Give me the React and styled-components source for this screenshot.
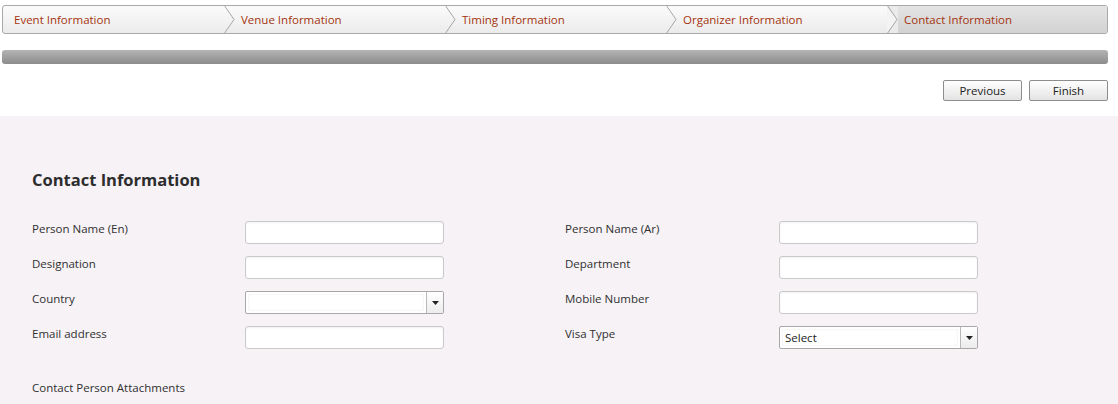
import React from 'react';
import styled, { createGlobalStyle } from 'styled-components';

const steps = [
  'Event Information',
  'Venue Information',
  'Timing Information',
  'Organizer Information',
  'Contact Information',
];

const fields = [
  { label: 'Person Name (En)', type: 'text' },
  { label: 'Person Name (Ar)', type: 'text' },
  { label: 'Designation', type: 'text' },
  { label: 'Department', type: 'text' },
  { label: 'Country', type: 'select', value: '' },
  { label: 'Mobile Number', type: 'text' },
  { label: 'Email address', type: 'text' },
  { label: 'Visa Type', type: 'select', value: 'Select' },
];

const GlobalStyle = createGlobalStyle`
  body {
    margin: 0;
    background: #ffffff;
    font-family: "Open Sans", "DejaVu Sans", sans-serif;
  }
`;

const Page = styled.div`
  width: 1118px;
  height: 404px;
  overflow: hidden;
  display: flex;
  flex-direction: column;
`;

const Top = styled.div`
  padding: 5px 10px 0 2px;
  display: flex;
  flex-direction: column;
`;

const Wizard = styled.div`
  display: flex;
  height: 27px;
  border: 1px solid #a9a9a9;
  border-radius: 3px;
  overflow: hidden;
  background: linear-gradient(#fbfbfb, #ebebeb);
`;

const Step = styled.div`
  display: flex;
  align-items: stretch;
  width: ${({ $last }) => ($last ? 'auto' : '221px')};
  flex: ${({ $last }) => ($last ? 1 : 'none')};
  background: ${({ $active }) => ($active ? 'linear-gradient(#e4e4e4, #d2d2d2)' : 'transparent')};
`;

const StepLabel = styled.span`
  display: flex;
  align-items: center;
  padding-left: ${({ $first }) => ($first ? '11px' : '6px')};
  font-size: 11.5px;
  color: #a3340e;
  white-space: nowrap;
`;

const Separator = styled.svg`
  flex: none;
  display: block;
`;

const Progress = styled.div`
  margin-top: 16px;
  height: 14px;
  border-radius: 3px;
  background: linear-gradient(#b4b4b4, #8c8c8c);
`;

const Actions = styled.div`
  display: flex;
  justify-content: flex-end;
  gap: 7px;
  margin-top: 16px;
`;

const Button = styled.button`
  width: 79px;
  height: 21px;
  padding: 0;
  border: 1px solid #8d8d8d;
  border-radius: 2px;
  background: linear-gradient(#ffffff, #e3e3e3);
  font-family: "Open Sans", "DejaVu Sans", sans-serif;
  font-size: 11.5px;
  color: #222;
`;

const Section = styled.section`
  margin-top: 15px;
  flex: 1;
  background: #f6f2f6;
  padding: 54px 0 0 32px;
`;

const Heading = styled.h2`
  margin: 0 0 31px;
  font-size: 16.5px;
  line-height: 20px;
  font-weight: 700;
  color: #2d2d2d;
`;

const Form = styled.div`
  display: grid;
  grid-template-columns: 213px 199px 121px 214px 199px;
  row-gap: 12px;
  align-items: start;
`;

const Label = styled.label`
  font-size: 11.5px;
  color: #303030;
  line-height: 16px;
`;

const Input = styled.input`
  box-sizing: border-box;
  width: 199px;
  height: 23px;
  border: 1px solid #cacaca;
  border-radius: 3px;
  background: #fff;
  box-shadow: inset 0 1px 2px rgba(0, 0, 0, 0.06);
  outline: none;
`;

const Select = styled.div`
  box-sizing: border-box;
  width: 199px;
  height: 23px;
  display: flex;
  border: 1px solid #a8a8a8;
  border-radius: 2px;
  background: #fff;
`;

const SelectValue = styled.div`
  flex: 1;
  margin: 2px;
  padding-left: 3px;
  border-radius: 2px;
  box-shadow: inset 0 0 2px rgba(0, 0, 0, 0.12);
  font-size: 11.5px;
  line-height: 17px;
  color: #222;
`;

const SelectArrow = styled.div`
  width: 16px;
  border-left: 1px solid #b8b8b8;
  background: linear-gradient(#ffffff, #ececec);
  display: flex;
  align-items: center;
  justify-content: center;
`;

const Spacer = styled.div``;

const Attachments = styled.div`
  margin-top: 31px;
  font-size: 11.5px;
  color: #303030;
`;

const Chevron = ({ active }) => (
  <Separator width="11" height="27" viewBox="0 0 11 27">
    {active && <polygon points="0,0 11,0 11,27 0,27 10,13.5" fill="#ebebeb" />}
    {active && <polygon points="0,0 10,13.5 0,27" fill="#f3f3f3" />}
    <polyline points="0,-1 10,13.5 0,28" fill="none" stroke="#a6a6a6" strokeWidth="1" />
  </Separator>
);

const Field = ({ field }) => {
  if (field.type === 'select') {
    return (
      <Select>
        <SelectValue>{field.value}</SelectValue>
        <SelectArrow>
          <svg width="7" height="4" viewBox="0 0 7 4">
            <polygon points="0,0 7,0 3.5,4" fill="#222" />
          </svg>
        </SelectArrow>
      </Select>
    );
  }
  return <Input type="text" />;
};

const App = () => (
  <Page>
    <GlobalStyle />
    <Top>
      <Wizard>
        {steps.map((s, i) => (
          <Step key={s} $active={i === steps.length - 1} $last={i === steps.length - 1}>
            {i > 0 && <Chevron active={i === steps.length - 1} />}
            <StepLabel $first={i === 0}>{s}</StepLabel>
          </Step>
        ))}
      </Wizard>
      <Progress />
      <Actions>
        <Button type="button">Previous</Button>
        <Button type="button">Finish</Button>
      </Actions>
    </Top>
    <Section>
      <Heading>Contact Information</Heading>
      <Form>
        {fields.map((f, i) => (
          <React.Fragment key={f.label}>
            <Label>{f.label}</Label>
            <Field field={f} />
            {i % 2 === 0 && <Spacer />}
          </React.Fragment>
        ))}
      </Form>
      <Attachments>Contact Person Attachments</Attachments>
    </Section>
  </Page>
);

export default App;
